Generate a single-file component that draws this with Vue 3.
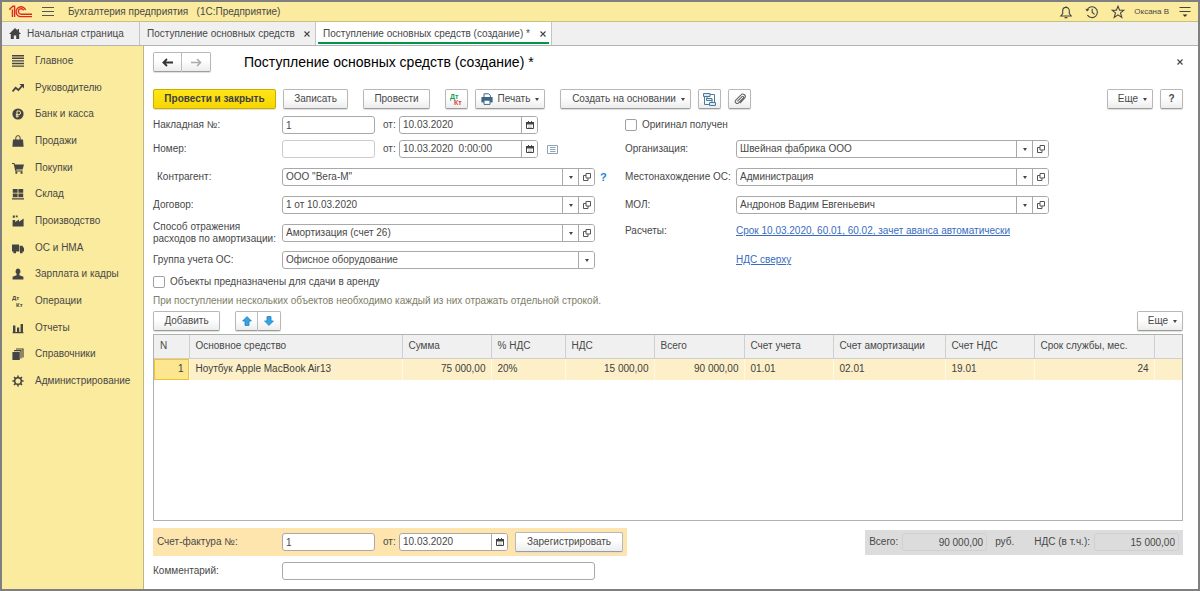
<script setup>
import { reactive, ref } from 'vue'

const sections = [
  { icon: 'main', name: 'Главное' },
  { icon: 'trend', name: 'Руководителю' },
  { icon: 'bank', name: 'Банк и касса' },
  { icon: 'bag', name: 'Продажи' },
  { icon: 'cart', name: 'Покупки' },
  { icon: 'store', name: 'Склад' },
  { icon: 'factory', name: 'Производство' },
  { icon: 'truck', name: 'ОС и НМА' },
  { icon: 'person', name: 'Зарплата и кадры' },
  { icon: 'entries', name: 'Операции' },
  { icon: 'chart', name: 'Отчеты' },
  { icon: 'books', name: 'Справочники' },
  { icon: 'gear', name: 'Администрирование' }
]

const form = reactive({
  invoice: '1',
  invoiceDate: '10.03.2020',
  number: '',
  date: '10.03.2020  0:00:00',
  rent: false,
  original: false,
  facture: '1',
  factureDate: '10.03.2020',
  comment: ''
})

const leftFields = reactive([
  { id: 'partner', label: 'Контрагент:', value: 'ООО "Вега-М"', open: true, help: true, inset: true },
  { id: 'contract', label: 'Договор:', value: '1 от 10.03.2020', open: true },
  { id: 'method', label: 'Способ отражения расходов по амортизации:', value: 'Амортизация (счет 26)', open: true },
  { id: 'group', label: 'Группа учета ОС:', value: 'Офисное оборудование', open: false }
])

const rightFields = reactive([
  { id: 'org', label: 'Организация:', value: 'Швейная фабрика ООО' },
  { id: 'place', label: 'Местонахождение ОС:', value: 'Администрация' },
  { id: 'mol', label: 'МОЛ:', value: 'Андронов Вадим Евгеньевич' }
])

const columns = ['N', 'Основное средство', 'Сумма', '% НДС', 'НДС', 'Всего', 'Счет учета', 'Счет амортизации', 'Счет НДС', 'Срок службы, мес.', '']
const numeric = [0, 2, 4, 5, 9]
const rows = ref([
  ['1', 'Ноутбук Apple MacBook Air13', '75 000,00', '20%', '15 000,00', '90 000,00', '01.01', '02.01', '19.01', '24', '']
])
</script>

<template>
  <div class="window">
    <header class="titlebar">
      <svg class="logo" viewBox="0 0 24 13" width="24" height="13" fill="none" stroke="#dd2a20" stroke-width="1.4">
        <path d="M1 5V3.8L4 1.2h1.6V12M3.4 4.6V12" />
        <path d="M16.6 5A4.9 4.9 0 1 0 12.4 11.6H23" />
        <path d="M14.6 5.4A2.7 2.7 0 1 0 12.4 9.2H23" />
      </svg>
      <button class="bare" aria-label="Меню">
        <svg viewBox="0 0 12 11" width="12" height="11" stroke="#555" stroke-width="1.1"><path d="M0 1.5h12M0 5.5h12M0 9.5h12" /></svg>
      </button>
      <span class="app-name">Бухгалтерия предприятия&nbsp;&nbsp; (1С:Предприятие)</span>
      <div class="title-tools">
        <button class="bare" aria-label="Оповещения">
          <svg viewBox="0 0 14 14" width="14" height="14" fill="none" stroke="#444" stroke-width="1.1"><path d="M7 1.2v1M1.8 11h10.4L10.3 8.6V6a3.3 3.6 0 0 0-6.6 0v2.6zM5.6 12.6h2.8" /></svg>
        </button>
        <button class="bare" aria-label="История">
          <svg viewBox="0 0 14 14" width="14" height="14" fill="none" stroke="#444" stroke-width="1.1"><path d="M2 5.2A5.4 5.4 0 1 1 2.4 10M7.2 3.8V7.4l2.4 2" /><path d="M.4 3.8 2 6.4 4.4 4.6z" fill="#444" stroke="none" /></svg>
        </button>
        <button class="bare" aria-label="Избранное">
          <svg viewBox="0 0 14 14" width="14" height="14" fill="none" stroke="#444" stroke-width="1.1"><path d="M7 1.2l1.6 4h4.3L9.5 7.9l1.3 4.5L7 9.8l-3.8 2.6 1.3-4.5L1.1 5.2h4.3z" /></svg>
        </button>
        <span class="user">Оксана В</span>
        <button class="bare" aria-label="Настройки окна">
          <svg viewBox="0 0 12 12" width="12" height="12" stroke="#444" stroke-width="1.1"><path d="M.5 1.5h11M.5 5.5h11" /><path d="M3.6 8.5h4.8L6 11z" fill="#333" stroke="none" /></svg>
        </button>
      </div>
    </header>

    <nav class="tabs">
      <button class="tab home">
        <svg viewBox="0 0 12 11" width="12" height="11" fill="#444"><path d="M6 0 0 6h1.8v5h3V7.5h2.4V11h3V6H12L10 4V1H8.6v1.5z" /></svg>
        Начальная страница
      </button>
      <div class="tab second"><button class="bare">Поступление основных средств</button><button class="bare x" aria-label="Закрыть вкладку"><svg viewBox="0 0 6 6" width="6" height="6"><path d="M.5.5l5 5M5.5.5l-5 5" stroke="#444" stroke-width="1.1" /></svg></button></div>
      <div class="tab active"><button class="bare">Поступление основных средств (создание) *</button><button class="bare x" aria-label="Закрыть вкладку"><svg viewBox="0 0 6 6" width="6" height="6"><path d="M.5.5l5 5M5.5.5l-5 5" stroke="#444" stroke-width="1.1" /></svg></button></div>
    </nav>

    <div class="body">
      <aside class="sidebar">
        <a v-for="s in sections" :key="s.icon" href="#" class="section">
          <svg viewBox="0 0 12 12" width="12" height="12" fill="#444">
            <path v-if="s.icon === 'main'" d="M0 0h12v1.4H0zM0 2.6h12V4H0zM0 5.2h12v1.4H0zM0 7.8h12v1.4H0zM0 10.4h12v1.4H0z" />
            <g v-else-if="s.icon === 'trend'"><path d="M.5 9.5 3.6 5.8 6.4 8 10 4" fill="none" stroke="#444" stroke-width="1.8" /><path d="M7.4 2H12v4.6z" /></g>
            <g v-else-if="s.icon === 'bank'"><circle cx="6" cy="6" r="5.6" /><path d="M5 9.6V3h1.8a1.7 1.7 0 0 1 0 3.6H3.8M3.8 8.2h3" fill="none" stroke="#fbeb9e" stroke-width="1" /></g>
            <g v-else-if="s.icon === 'bag'"><path d="M1 4.5h10l.6 7.3H.4z" /><path d="M3.8 6.4V3a2.2 2.4 0 0 1 4.4 0v3.4" fill="none" stroke="#444" stroke-width="1" /></g>
            <path v-else-if="s.icon === 'cart'" d="M0 1h2.4l.5 1.4H12L10.6 7.4H4.2l.2 1h6.2v1H3.4L1.7 2H0zM3.4 9.8h1.9v1.9H3.4zM8.6 9.8h1.9v1.9H8.6z" />
            <path v-else-if="s.icon === 'store'" d="M.8 1h4.8v3.8H.8zM6.4 1h4.8v3.8H6.4zM.8 5.6h4.8v3.6H.8zM6.4 5.6h4.8v3.6H6.4zM0 10.2h12v1.4H0z" />
            <path v-else-if="s.icon === 'factory'" d="M.8.6h2v2.2h-2zM3.8.6h1.8v1.6H3.8zM.6 5h2.6v2L7 4.6v2.2l4.6-3.4v8H.6z" />
            <path v-else-if="s.icon === 'truck'" d="M0 2.4h7v7H0zM7.6 3.8h2.8L12 6.2v3.2H7.6zM1.4 8.4h2.6v2.8H1.4zM8 8.4h2.6v2.8H8z" />
            <path v-else-if="s.icon === 'person'" d="M6 .6a2.7 2.9 0 0 1 1.4 5.2v1.4l4 1.6v2.6H.6V8.8l4-1.6V5.8A2.7 2.9 0 0 1 6 .6z" />
            <g v-else-if="s.icon === 'entries'" class="entries"><text x="0" y="5">Дт</text><text x="4" y="12">Кт</text></g>
            <path v-else-if="s.icon === 'chart'" d="M1 3.4h2.4V10H1zM5 5.4h2.2V10H5zM8.6 2h2.4v8H8.6zM.6 10h10.8v1.2H.6z" />
            <g v-else-if="s.icon === 'books'"><path d="M.4 4h7.4v8H.4z" /><path d="M2 2.6h7v8M4 1h7v8.4" fill="none" stroke="#444" stroke-width="1.2" /></g>
            <g v-else fill="none" stroke="#444"><circle cx="6" cy="6" r="3.3" stroke-width="1.5" /><path d="M6 .4v2M6 9.6v2M.4 6h2M9.6 6h2M2 2l1.4 1.4M8.6 8.6 10 10M2 10l1.4-1.4M8.6 3.4 10 2" stroke-width="1.5" /></g>
          </svg>
          {{ s.name }}
        </a>
      </aside>

      <main class="page">
        <div class="heading">
          <div class="pair nav-pair">
            <button class="btn" aria-label="Назад"><svg viewBox="0 0 11 9" width="11" height="9" fill="none" stroke="#333" stroke-width="1.8"><path d="M11 4.5H1.6M5 1 1.4 4.5 5 8" /></svg></button>
            <button class="btn" aria-label="Вперед"><svg viewBox="0 0 11 9" width="11" height="9" fill="none" stroke="#aaa" stroke-width="1.5"><path d="M0 4.5h9.4M6 1l3.6 3.5L6 8" /></svg></button>
          </div>
          <h1>Поступление основных средств (создание) *</h1>
          <button class="bare close" aria-label="Закрыть"><svg viewBox="0 0 6 6" width="6" height="6"><path d="M.5.5l5 5M5.5.5l-5 5" stroke="#444" stroke-width="1.1" /></svg></button>
        </div>

        <div class="toolbar">
          <button class="btn primary">Провести и закрыть</button>
          <button class="btn save">Записать</button>
          <button class="btn post">Провести</button>
          <button class="btn square dtkt"><svg viewBox="0 0 14 13" width="14" height="13"><text x="0" y="6" fill="#1a9c54">Дт</text><text x="4" y="12" fill="#e0433c">Кт</text></svg></button>
          <button class="btn print">
            <svg viewBox="0 0 12 12" width="12" height="12"><path d="M3 4V.8h4.6L9.4 2.4V4" fill="#fff" stroke="#3d6685" /><path d="M.4 4h11.2v5.4H.4z" fill="#3d6685" /><path d="M3 7.2h6v4.2H3z" fill="#fff" stroke="#3d6685" /></svg>
            Печать <i class="caret"></i>
          </button>
          <button class="btn based">Создать на основании <i class="caret"></i></button>
          <button class="btn square" aria-label="Структура подчиненности"><svg viewBox="0 0 13 13" width="13" height="13" fill="none" stroke="#4c7ba0"><path d="M1.5 4v7.500h5M7 1.500h4.500V9M4 4v2.500M9 6.500v3" /><path d="M.5.5H7V3.500H.5zM3.500 5.500H9V7.500H3.500zM6.500 9.500h6v3h-6z" fill="#dce8f2" /></svg></button>
          <button class="btn square" aria-label="Вложения"><svg viewBox="0 0 12 12" width="12" height="12" fill="none" stroke="#666" stroke-width="1.1"><path d="M3.4 8.4 8 3.6a.9.9 0 0 1 1.4 1.3L4.6 9.8a1.9 1.9 0 0 1-2.8-2.7L7 1.9a2.4 2.4 0 0 1 3.6 3.3L6 10" /></svg></button>
          <button class="btn more push">Еще <i class="caret"></i></button>
          <button class="btn square help-btn">?</button>
        </div>

        <div class="form">
          <div class="col">
            <div class="row">
              <label class="lbl" for="invoice">Накладная №:</label>
              <input id="invoice" v-model="form.invoice" class="field short">
              <label class="from" for="invoiceDate">от:</label>
              <div class="combo date">
                <input id="invoiceDate" v-model="form.invoiceDate">
                <button aria-label="Календарь"><svg viewBox="0 0 8 8" width="8" height="8"><path d="M.5 1.5h7v6h-7z" fill="#fff" stroke="#444" /><path d="M0 1h8v2.4H0zM2 0h1v1H2zM5 0h1v1H5z" fill="#444" /><path d="M2 5h4M2 6.5h4" stroke="#aaa" stroke-width=".7" /></svg></button>
              </div>
            </div>
            <div class="row spaced">
              <label class="lbl" for="number">Номер:</label>
              <input id="number" v-model="form.number" class="field short pale">
              <label class="from" for="date">от:</label>
              <div class="combo date">
                <input id="date" v-model="form.date">
                <button aria-label="Календарь"><svg viewBox="0 0 8 8" width="8" height="8"><path d="M.5 1.5h7v6h-7z" fill="#fff" stroke="#444" /><path d="M0 1h8v2.4H0zM2 0h1v1H2zM5 0h1v1H5z" fill="#444" /><path d="M2 5h4M2 6.5h4" stroke="#aaa" stroke-width=".7" /></svg></button>
              </div>
              <svg class="card" viewBox="0 0 11 9" width="11" height="9" fill="#fff" stroke="#8fa3b5"><path d="M.5.5h10v8H.5z" /><path d="M3 2.5h5.5M3 4.5h5.5M3 6.5h5.5" /></svg>
            </div>
            <div v-for="f in leftFields" :key="f.id" class="row tall">
              <label class="lbl" :class="{ inset: f.inset }" :for="f.id">{{ f.label }}</label>
              <div class="combo wide">
                <input :id="f.id" v-model="f.value">
                <button aria-label="Выбрать"><i class="caret"></i></button>
                <button v-if="f.open" aria-label="Открыть"><svg viewBox="0 0 8 8" width="8" height="8" fill="#fff" stroke="#555"><path d="M.5 2.5H5v5H.5z" /><path d="M3 .5h4.5V5H3z" /></svg></button>
              </div>
              <a v-if="f.help" class="hint" href="#">?</a>
            </div>
          </div>

          <div class="col">
            <div class="row">
              <label class="check"><input v-model="form.original" type="checkbox"> Оригинал получен</label>
            </div>
            <div v-for="(f, i) in rightFields" :key="f.id" class="row" :class="i === 0 ? 'spaced' : 'tall'">
              <label class="lbl2" :for="f.id">{{ f.label }}</label>
              <div class="combo wide">
                <input :id="f.id" v-model="f.value">
                <button aria-label="Выбрать"><i class="caret"></i></button>
                <button aria-label="Открыть"><svg viewBox="0 0 8 8" width="8" height="8" fill="#fff" stroke="#555"><path d="M.5 2.5H5v5H.5z" /><path d="M3 .5h4.5V5H3z" /></svg></button>
              </div>
            </div>
            <div class="row">
              <span class="lbl2">Расчеты:</span>
              <a class="link" href="#">Срок 10.03.2020, 60.01, 60.02, зачет аванса автоматически</a>
            </div>
            <div class="row vat">
              <span class="lbl2"></span>
              <a class="link" href="#">НДС сверху</a>
            </div>
          </div>
        </div>

        <label class="check rent"><input v-model="form.rent" type="checkbox"> Объекты предназначены для сдачи в аренду</label>
        <p class="note">При поступлении нескольких объектов необходимо каждый из них отражать отдельной строкой.</p>

        <div class="table-tools">
          <button class="btn add">Добавить</button>
          <div class="pair move-pair">
            <button class="btn" aria-label="Вверх"><svg viewBox="0 0 10 10" width="10" height="10"><path d="M5 .6 9.4 5H7v4.4H3V5H.6z" fill="#35a4e4" stroke="#1f7fbd" stroke-width=".8" /></svg></button>
            <button class="btn" aria-label="Вниз"><svg viewBox="0 0 10 10" width="10" height="10"><path d="M5 9.4.6 5H3V.6h4V5h2.4z" fill="#35a4e4" stroke="#1f7fbd" stroke-width=".8" /></svg></button>
          </div>
          <button class="btn more push">Еще <i class="caret"></i></button>
        </div>

        <div class="grid">
          <table>
            <colgroup><col v-for="(c, i) in columns" :key="i" :class="'c' + i"></colgroup>
            <thead><tr><th v-for="(c, i) in columns" :key="i">{{ c }}</th></tr></thead>
            <tbody>
              <tr v-for="r in rows" :key="r[0]">
                <td v-for="(v, i) in r" :key="i" :class="{ num: numeric.includes(i), current: i === 0 }">{{ v }}</td>
              </tr>
            </tbody>
          </table>
        </div>

        <div class="bottom">
          <div class="facture">
            <label class="lbl inset" for="facture">Счет-фактура №:</label>
            <input id="facture" v-model="form.facture" class="field short">
            <label class="from" for="factureDate">от:</label>
            <div class="combo date small">
              <input id="factureDate" v-model="form.factureDate">
              <button aria-label="Календарь"><svg viewBox="0 0 8 8" width="8" height="8"><path d="M.5 1.5h7v6h-7z" fill="#fff" stroke="#444" /><path d="M0 1h8v2.4H0zM2 0h1v1H2zM5 0h1v1H5z" fill="#444" /><path d="M2 5h4M2 6.5h4" stroke="#aaa" stroke-width=".7" /></svg></button>
            </div>
            <button class="btn register">Зарегистрировать</button>
          </div>
          <div class="totals">
            <label for="total">Всего:</label>
            <input id="total" class="sum" value="90 000,00" readonly>
            <span class="rub">руб.</span>
            <label for="vatTotal">НДС (в т.ч.):</label>
            <input id="vatTotal" class="sum" value="15 000,00" readonly>
          </div>
        </div>
        <div class="comment">
          <label class="lbl" for="comment">Комментарий:</label>
          <input id="comment" v-model="form.comment" class="field long">
        </div>
      </main>
    </div>
  </div>
</template>

<style>
html, body { margin: 0; background: #fff; }
</style>

<style scoped>
.window { display: flex; flex-direction: column; min-height: 100vh; box-sizing: border-box; border: 2px solid #7f7f7f; background: #fff; color: #484848; font: 10px/12px "Liberation Sans", Arial, sans-serif; }
.window * { box-sizing: border-box; }
button, input { font: inherit; color: inherit; margin: 0; }
svg { display: block; flex: none; }
.bare { border: 0; padding: 0; background: none; }
.titlebar { display: flex; align-items: center; height: 20px; padding: 0 7px; background: #fbeb9e; border-bottom: 1px solid #c9bf86; }
.logo { margin-right: 9px; }
.app-name { margin-left: 14px; }
.title-tools { display: flex; align-items: center; gap: 12px; margin-left: auto; }
.user { font-size: 8px; margin-right: -2px; margin-left: -3px; }
.tabs { display: flex; height: 24px; background: #f0f0f0; border-bottom: 1px solid #b4b4b4; }
.tab { display: flex; align-items: center; border: 0; border-right: 1px solid #c4c4c4; background: none; white-space: nowrap; }
.home { width: 138px; gap: 6px; padding: 0 7px; }
.second { width: 176px; padding: 0 5px 0 7px; justify-content: space-between; }
.active { width: 236px; padding: 0 5px 0 7px; justify-content: space-between; background: linear-gradient(#009646, #009646) 2px 20px / calc(100% - 4px) 2px no-repeat #fff; }
.body { flex: 1; display: flex; }
.sidebar { width: 142px; flex: none; padding-top: 1px; background: #fbeb9e; border-right: 1px solid #bdb58a; }
.section { display: flex; align-items: center; gap: 11px; height: 27px; padding-left: 10px; color: #484848; text-decoration: none; white-space: nowrap; }
.section:nth-child(3n) { height: 26px; }
.entries { font: bold 6px "Liberation Sans", Arial, sans-serif; }
.page { flex: 1; min-width: 0; display: flex; flex-direction: column; padding: 6px 15px 9px 9px; }
.btn { display: flex; align-items: center; justify-content: center; height: 20px; padding: 0; border: 1px solid #b8b8b8; border-bottom-color: #9c9c9c; border-radius: 2px; background: linear-gradient(#fff 40%, #ededed); box-shadow: 0 1px 1px #ddd; white-space: nowrap; }
.caret { flex: none; border: 3px solid transparent; border-top-color: #444; border-bottom: 0; }
.btn .caret { margin-left: 5px; border-width: 3px 2px 0; }
.pair { display: flex; }
.pair .btn:first-child { border-radius: 2px 0 0 2px; }
.pair .btn:last-child { border-radius: 0 2px 2px 0; border-left: 0; }
.nav-pair .btn { width: 29px; }
.heading { display: flex; align-items: center; height: 20px; }
h1 { margin: 0 0 0 33px; color: #000; font-size: 14px; line-height: 20px; font-weight: normal; }
.close { margin-left: auto; }
.toolbar { display: flex; gap: 7px; margin-top: 17px; }
.primary { width: 123px; border-color: #c9ad00; background: linear-gradient(#ffe51a, #f7d600); font-weight: bold; color: #3f3f3f; }
.save { width: 65px; }
.post { width: 67px; margin: 0 8px; }
.square { width: 23px; }
.dtkt svg { font: bold 7px "Liberation Sans", Arial, sans-serif; }
.print { width: 70px; gap: 5px; }
.print .caret { margin-left: 0; }
.based { width: 131px; margin-left: 8px; padding-left: 6px; }
.more { width: 46px; padding-left: 5px; }
.push { margin-left: auto; }
.help-btn { font-weight: bold; }
.form { display: grid; grid-template-columns: minmax(0, 472fr) minmax(0, 558fr); margin-top: 4px; }
.row { display: flex; align-items: center; height: 24px; }
.spaced { margin-bottom: 2px; }
.tall { height: 28px; }
.col:first-child .tall:last-child, .vat { height: 26px; }
.vat { margin-top: 4px; }
.lbl { width: 129px; flex: none; }
.inset { padding-left: 4px; }
.lbl2 { width: 111px; flex: none; white-space: nowrap; }
.field, .combo { height: 18px; border: 1px solid #a9a9a9; border-radius: 3px; background: #fff; }
.field { padding: 0 3px; }
.short { width: 93px; flex: none; }
.pale { border-color: #ccc; }
.long { width: 313px; }
.from { width: 24px; flex: none; padding-left: 8px; }
.combo { display: flex; overflow: hidden; }
.combo input { flex: 1; min-width: 0; border: 0; padding: 0 3px; outline: 0; background: none; white-space: pre; }
.combo button { display: flex; align-items: center; justify-content: center; width: 16px; flex: none; padding: 0; border: 0; border-left: 1px solid #a9a9a9; background: #fff; }
.combo .caret { border-width: 3px 2px 0; }
.wide { width: 313px; }
.date { width: 139px; }
.small { width: 109px; }
.card { margin-left: 9px; }
.hint { margin-left: 5px; color: #1c86d1; font-size: 11px; font-weight: bold; text-decoration: none; }
.link { color: #3a6cc0; }
.check { display: flex; align-items: center; gap: 5px; }
.check input { appearance: none; width: 12px; height: 12px; border: 1px solid #a0a0a0; border-radius: 2px; background: #fff; }
.check input:checked { background: #777; }
.rent { height: 18px; }
.note { margin: 0; line-height: 20px; color: #7e7e66; }
.table-tools { display: flex; }
.add { width: 67px; }
.move-pair { margin-left: 15px; }
.move-pair .btn { width: 23px; }
.grid { flex: 1; margin-top: 3px; border: 1px solid #adb3ad; }
table { width: 100%; table-layout: fixed; border-collapse: collapse; }
.c0 { width: 35px; } .c1 { width: 213px; } .c2, .c4, .c6, .c8 { width: 89px; } .c3 { width: 74px; } .c5 { width: 90px; } .c7 { width: 112px; } .c9 { width: 120px; } .c10 { width: 28px; }
th { height: 23px; padding: 0 6px; border-right: 1px solid #cfcfcf; border-bottom: 1px solid #cfcfcf; background: #f0f0f0; font-weight: normal; text-align: left; white-space: nowrap; }
td { height: 22px; padding: 0 5px 0 6px; border-right: 1px solid #fff8e2; background: #fdf0c8; white-space: nowrap; color: #404040; }
th:last-child, td:last-child { border-right: 0; }
.num { text-align: right; }
.current { background: #fce68f; box-shadow: inset 0 0 0 1px #f2c230; }
.bottom { display: flex; align-items: center; justify-content: space-between; margin-top: 7px; }
.facture { display: flex; align-items: center; width: 474px; height: 28px; background: #fee5ae; }
.register { width: 108px; margin-left: 7px; }
.totals { display: flex; align-items: center; height: 25px; padding: 0 4px; background: #dcdcdc; white-space: nowrap; }
.sum { width: 85px; height: 18px; margin-left: 4px; padding: 0 3px; border: 1px solid #d0d0d0; border-radius: 3px; background: none; text-align: right; }
.rub { margin: 0 20px 0 8px; }
.comment { display: flex; align-items: center; margin-top: 6px; }
</style>
